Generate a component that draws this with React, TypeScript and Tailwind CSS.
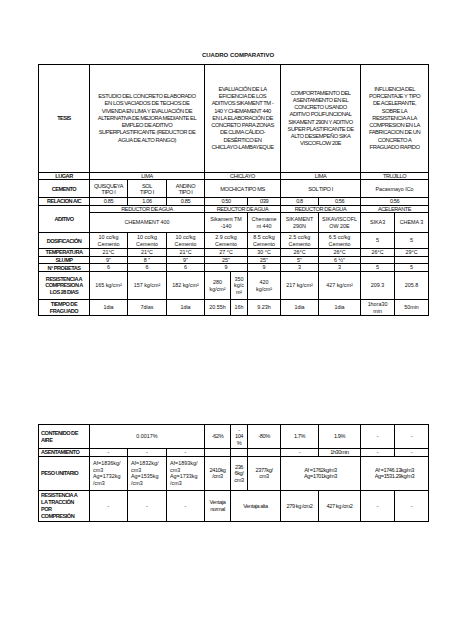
const td = "border border-black p-0 text-center align-middle";
const lab = `${td} font-bold text-[5.6px] leading-[6.4px] tracking-[-0.5px]`;
const labL = `${td} font-bold text-[5.6px] leading-[6.8px] tracking-[-0.5px] !text-left pl-[2px]`;
const head = `${td} text-[5.8px] leading-[7.2px] tracking-[-0.45px] whitespace-nowrap overflow-hidden`;
const nar = `${td} text-[5.6px] leading-[6.4px] tracking-[-0.4px]`;
const cal = `${td} text-[5.4px] leading-[6.6px]`;

const Cols = () => (
  <colgroup>
    <col className="w-[51px]" />
    <col className="w-[38px]" />
    <col className="w-[39px]" />
    <col className="w-[38px]" />
    <col className="w-[26px]" />
    <col className="w-[17px]" />
    <col className="w-[33px]" />
    <col className="w-[38px]" />
    <col className="w-[42px]" />
    <col className="w-[34px]" />
    <col className="w-[34px]" />
  </colgroup>
);

export default function App() {
  return (
    <div className="w-[474px] h-[632px] bg-white text-[#111] font-['Liberation_Sans',Arial,sans-serif] pt-[52px]">
      <p className="text-center font-bold text-[6px] leading-[6px] pl-[2px]">CUADRO COMPARATIVO</p>

      <table className="mt-[6px] ml-[38px] w-[390px] table-fixed border-collapse">
        <Cols />
        <tbody>
          <tr className="h-[108px]">
            <td className={lab}>TESIS</td>
            <td colSpan={3} className={head}>
              ESTUDIO DEL CONCRETO ELABORADO<br />EN LOS VACIADOS DE TECHOS DE<br />VIVIENDA EN LIMA Y EVALUACIÓN DE
              <br />ALTERNATIVA DE MEJORA MEDIANTE EL<br />EMPLEO DE ADITIVO<br />SUPERPLASTIFICANTE (REDUCTOR DE
              <br />AGUA DE ALTO RANGO)
            </td>
            <td colSpan={3} className={`${head} tracking-[-0.7px]`}>
              EVALUACIÓN DE LA<br />EFICIENCIA DE LOS<br />ADITIVOS SIKAMENT TM -<br />140 Y CHEMAMENT 440
              <br />EN LA ELABORACIÓN DE<br />CONCRETO PARA ZONAS<br />DE CLIMA CÁLIDO-<br />DESÉRTICO EN
              <br />CHICLAYO-LAMBAYEQUE
            </td>
            <td colSpan={2} className={`${head} tracking-[-0.6px]`}>
              COMPORTAMIENTO DEL<br />ASENTAMIENTO EN EL<br />CONCRETO USANDO<br />ADITIVO POLIFUNCIONAL
              <br />SIKAMENT 290N Y ADITIVO<br />SUPER PLASTIFICANTE DE<br />ALTO DESEMPEÑO SIKA<br />VISCOFLOW 20E
            </td>
            <td colSpan={2} className={`${head} tracking-[-0.5px]`}>
              INFLUENCIA DEL<br />PORCENTAJE Y TIPO<br />DE ACELERANTE,<br />SOBRE LA<br />RESISTENCIA A LA
              <br />COMPRESION EN LA<br />FABRICACION DE UN<br />CONCRETO A<br />FRAGUADO RAPIDO
            </td>
          </tr>
          <tr className="h-[7px]">
            <td className={lab}>LUGAR</td>
            <td colSpan={3} className={nar}>LIMA</td>
            <td colSpan={3} className={nar}>CHICLAYO</td>
            <td colSpan={2} className={nar}>LIMA</td>
            <td colSpan={2} className={nar}>TRUJILLO</td>
          </tr>
          <tr className="h-[18px]">
            <td className={lab}>CEMENTO</td>
            <td className={nar}>QUISQUEYA<br />TIPO I</td>
            <td className={nar}>SOL<br />TIPO I</td>
            <td className={nar}>ANDINO<br />TIPO I</td>
            <td colSpan={3} className={nar}>MOCHICA TIPO MS</td>
            <td colSpan={2} className={nar}>SOL TIPO I</td>
            <td colSpan={2} className={cal}>Pacasmayo ICo</td>
          </tr>
          <tr className="h-[6px]">
            <td className={lab}>RELACION A/C</td>
            <td className={nar}>0.85</td>
            <td className={nar}>1.06</td>
            <td className={nar}>0.85</td>
            <td colSpan={2} className={nar}>0.50</td>
            <td className={nar}>039</td>
            <td className={nar}>0.8</td>
            <td className={nar}>0.56</td>
            <td colSpan={2} className={nar}>0.56</td>
          </tr>
          <tr className="h-[6px]">
            <td rowSpan={2} className={lab}>ADITIVO</td>
            <td colSpan={3} className={nar}>REDUCTOR DE AGUA</td>
            <td colSpan={3} className={nar}>REDUCTOR DE AGUA</td>
            <td colSpan={2} className={nar}>REDUCTOR DE AGUA</td>
            <td colSpan={2} className={nar}>ACELERANTE</td>
          </tr>
          <tr className="h-[20px]">
            <td colSpan={3} className={cal}>CHEMAMENT 400</td>
            <td colSpan={2} className={cal}>Sikament TM<br />-140</td>
            <td className={cal}>Chemame<br />nt 440</td>
            <td className={cal}>SIKAMENT<br />290N</td>
            <td className={cal}>SIKAVISCOFL<br />OW 20E</td>
            <td className={cal}>SIKA3</td>
            <td className={cal}>CHEMA 3</td>
          </tr>
          <tr className="h-[16px]">
            <td className={lab}>DOSIFICACIÓN</td>
            <td className={cal}>10 cc/kg<br />Cemento</td>
            <td className={cal}>10 cc/kg<br />Cemento</td>
            <td className={cal}>10 cc/kg<br />Cemento</td>
            <td colSpan={2} className={cal}>2.9 cc/kg<br />Cemento</td>
            <td className={cal}>8.5 cc/kg<br />Cemento</td>
            <td className={cal}>2.5 cc/kg<br />Cemento</td>
            <td className={cal}>6.5 cc/kg<br />Cemento</td>
            <td className={cal}>5</td>
            <td className={cal}>5</td>
          </tr>
          <tr className="h-[7px]">
            <td className={lab}>TEMPERATURA</td>
            <td className={cal}>21°C</td>
            <td className={cal}>21°C</td>
            <td className={cal}>21°C</td>
            <td colSpan={2} className={cal}>27 °C</td>
            <td className={cal}>30 °C</td>
            <td className={cal}>26°C</td>
            <td className={cal}>26°C</td>
            <td className={cal}>26°C</td>
            <td className={cal}>29°C</td>
          </tr>
          <tr className="h-[6px]">
            <td className={lab}>SLUMP</td>
            <td className={cal}>9"</td>
            <td className={cal}>8 "</td>
            <td className={cal}>9"</td>
            <td colSpan={2} className={cal}>25"</td>
            <td className={cal}>25"</td>
            <td className={cal}>5"</td>
            <td className={cal}>6 ½"</td>
            <td className={cal}></td>
            <td className={cal}></td>
          </tr>
          <tr className="h-[7px]">
            <td className={lab}>N° PROBETAS</td>
            <td className={cal}>6</td>
            <td className={cal}>6</td>
            <td className={cal}>6</td>
            <td colSpan={2} className={cal}>9</td>
            <td className={cal}>9</td>
            <td className={cal}>3</td>
            <td className={cal}>3</td>
            <td className={cal}>5</td>
            <td className={cal}>5</td>
          </tr>
          <tr className="h-[28px]">
            <td className={lab}>RESISTENCIA A<br />COMPRESION A<br />LOS 28 DIAS</td>
            <td className={cal}>165 kg/cm²</td>
            <td className={cal}>157 kg/cm²</td>
            <td className={cal}>182 kg/cm²</td>
            <td className={cal}>280<br />kg/cm²</td>
            <td className={cal}>350<br />kg/c<br />m²</td>
            <td className={cal}>420<br />kg/cm²</td>
            <td className={cal}>217 kg/cm²</td>
            <td className={cal}>427 kg/cm²</td>
            <td className={cal}>209.3</td>
            <td className={cal}>205.8</td>
          </tr>
          <tr className="h-[16px]">
            <td className={lab}>TIEMPO DE<br />FRAGUADO</td>
            <td className={cal}>1dia</td>
            <td className={cal}>7dias</td>
            <td className={cal}>1dia</td>
            <td className={cal}>20.55h</td>
            <td className={cal}>16h</td>
            <td className={cal}>9.23h</td>
            <td className={cal}>1dia</td>
            <td className={cal}>1dia</td>
            <td className={cal}>1hora30<br />min</td>
            <td className={cal}>50min</td>
          </tr>
        </tbody>
      </table>

      <table className="mt-[108px] ml-[38px] w-[390px] table-fixed border-collapse">
        <Cols />
        <tbody>
          <tr className="h-[24px]">
            <td className={labL}>CONTENIDO DE<br />AIRE</td>
            <td colSpan={3} className={cal}>0.0017%</td>
            <td className={nar}>-62%</td>
            <td className={nar}>-<br />104<br />%</td>
            <td className={nar}>-80%</td>
            <td className={nar}>1.7%</td>
            <td className={nar}>1.9%</td>
            <td className={nar}>-</td>
            <td className={nar}>-</td>
          </tr>
          <tr className="h-[7px]">
            <td className={labL}>ASENTAMIENTO</td>
            <td className={cal}>-</td>
            <td className={cal}>-</td>
            <td className={cal}>-</td>
            <td className={nar}></td>
            <td className={nar}></td>
            <td className={nar}></td>
            <td className={nar}>-</td>
            <td className={nar}>1h30min</td>
            <td className={nar}>-</td>
            <td className={nar}>-</td>
          </tr>
          <tr className="h-[34px]">
            <td className={labL}>PESO UNITARIO</td>
            <td className={`${cal} !text-left pl-[3px]`}>Af=1836kg/<br />cm3<br />Ag=1732kg<br />/cm3</td>
            <td className={`${cal} !text-left pl-[3px]`}>Af=1832kg/<br />cm3<br />Ag=1535kg<br />/cm3</td>
            <td className={`${cal} !text-left pl-[3px]`}>Af=1893kg/<br />cm3<br />Ag=1733kg<br />/cm3</td>
            <td className={nar}>2410kg<br />/cm3</td>
            <td className={nar}>236<br />6kg/<br />cm3</td>
            <td className={nar}>2377kg/<br />cm3</td>
            <td colSpan={2} className={nar}>Af =1762kg/m3<br />Ag=1701kg/m3</td>
            <td colSpan={2} className={nar}>Af =1746.13kg/m3<br />Ag=1531.29kg/m3</td>
          </tr>
          <tr className="h-[31px]">
            <td className={labL}>RESISTENCIA A<br />LA TRACCIÓN<br />POR<br />COMPRESIÓN</td>
            <td className={cal}>-</td>
            <td className={cal}>-</td>
            <td className={cal}>-</td>
            <td className={nar}>Ventaja<br />normal</td>
            <td colSpan={2} className={nar}>Ventaja alta</td>
            <td className={nar}>279 kg /cm2</td>
            <td className={nar}>427 kg /cm2</td>
            <td className={nar}>-</td>
            <td className={nar}>-</td>
          </tr>
        </tbody>
      </table>
    </div>
  );
}
